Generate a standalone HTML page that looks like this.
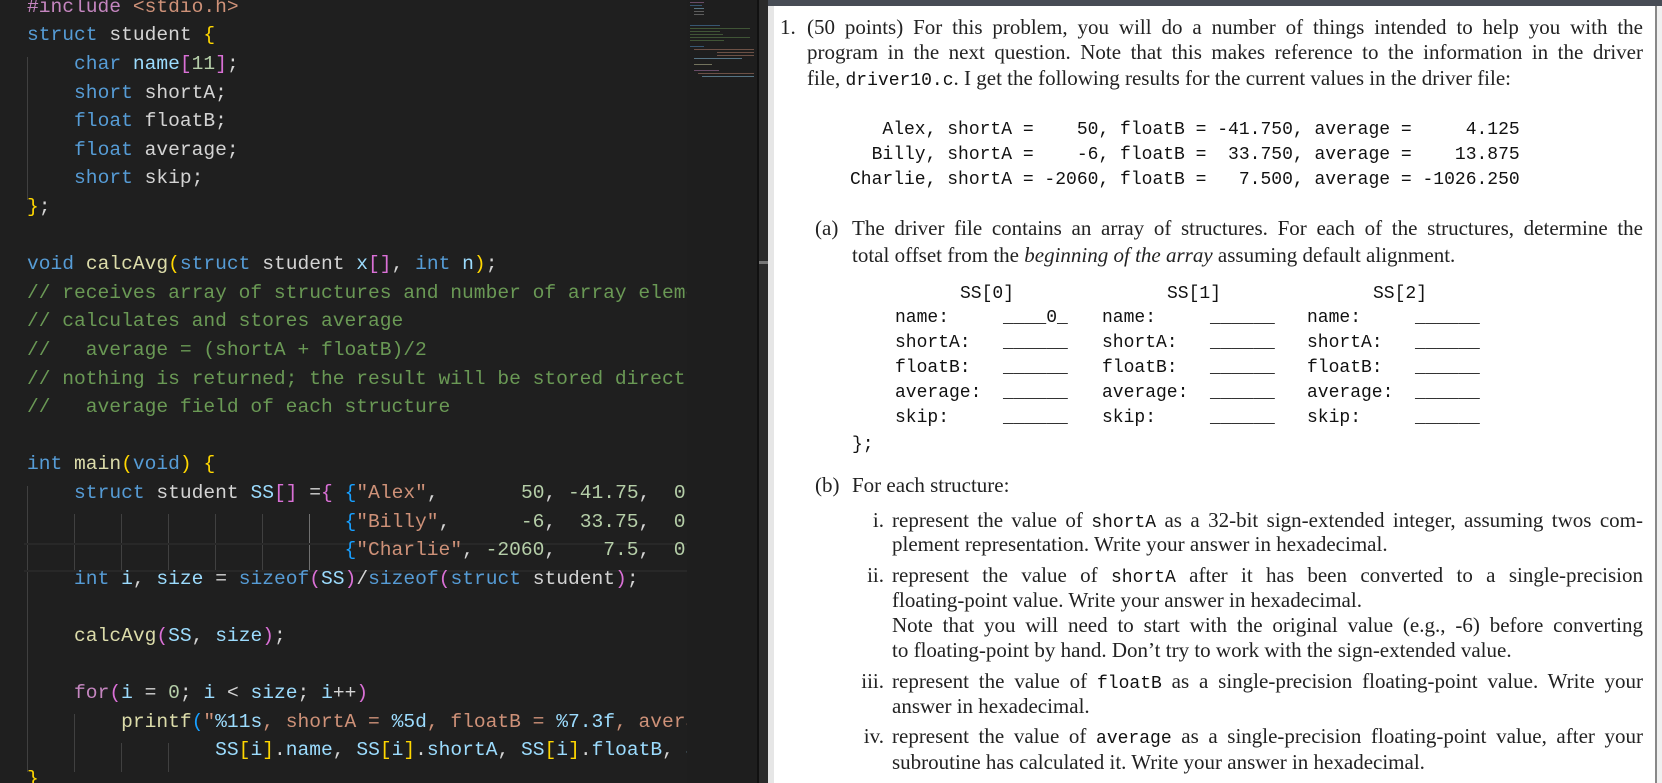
<!DOCTYPE html>
<html><head><meta charset="utf-8"><style>
*{margin:0;padding:0;box-sizing:border-box}
body{width:1662px;height:783px;overflow:hidden;background:#1f1f1f;position:relative;font-family:"Liberation Sans",sans-serif}
#ed{position:absolute;left:0;top:0;width:687px;height:783px;overflow:hidden;background:#1f1f1f}
.l{position:absolute;left:27px;height:28.6px;line-height:28.6px;font-family:"Liberation Mono",monospace;font-size:19.6px;white-space:pre;color:#d4d4d4}
.k{color:#569cd6}.v{color:#9cdcfe}.c{color:#6a9955}.s{color:#ce9178}.n{color:#b5cea8}.f{color:#dcdcaa}.p{color:#c586c0}.y{color:#ffd700}.m{color:#da70d6}.b{color:#179fff}
.g{position:absolute;width:1px;background:#404040}
#mm{position:absolute;left:687px;top:0;width:70px;height:783px;background:#1e1e1e}
.mb{position:absolute;height:1px;opacity:.45}
#doc{position:absolute;left:774px;top:0;width:881px;height:783px;background:#fff}
.d{position:absolute;font-family:"Liberation Serif",serif;font-size:21px;line-height:26px;color:#222;white-space:nowrap}
.j{text-align:justify;text-align-last:justify;white-space:normal;height:26px;overflow:visible}
.tt{font-family:"Liberation Mono",monospace;font-size:18px;color:#111}
.mo{position:absolute;font-family:"Liberation Mono",monospace;font-size:18px;line-height:25px;color:#111;white-space:pre}
</style></head><body>
<div id="ed">
<div class="g" style="left:27px;top:57px;height:143px"></div>
<div class="g" style="left:27px;top:486px;height:286px"></div>
<div class="g" style="left:74px;top:514px;height:58px"></div>
<div class="g" style="left:121px;top:514px;height:58px"></div>
<div class="g" style="left:168px;top:514px;height:58px"></div>
<div class="g" style="left:215px;top:514px;height:58px"></div>
<div class="g" style="left:262px;top:514px;height:58px"></div>
<div class="g" style="left:309px;top:514px;height:58px;background:#707070"></div>
<div class="g" style="left:74px;top:743px;height:29px"></div>
<div class="g" style="left:121px;top:743px;height:29px"></div>
<div class="g" style="left:168px;top:743px;height:29px"></div>
<div class="g" style="left:74px;top:714px;height:29px"></div>
<div style="position:absolute;left:24px;top:543px;width:663px;height:29px;border-top:2px solid #282828;border-bottom:2px solid #282828"></div>
<div class="l" style="top:-7.3px"><span class="p">#include</span> <span class="s">&lt;stdio.h&gt;</span></div>
<div class="l" style="top:21.3px"><span class="k">struct</span> student <span class="y">{</span></div>
<div class="l" style="top:49.9px">    <span class="k">char</span> <span class="v">name</span><span class="m">[</span><span class="n">11</span><span class="m">]</span>;</div>
<div class="l" style="top:78.5px">    <span class="k">short</span> shortA;</div>
<div class="l" style="top:107.1px">    <span class="k">float</span> floatB;</div>
<div class="l" style="top:135.7px">    <span class="k">float</span> average;</div>
<div class="l" style="top:164.3px">    <span class="k">short</span> skip;</div>
<div class="l" style="top:192.9px"><span class="y">}</span>;</div>
<div class="l" style="top:250.1px"><span class="k">void</span> <span class="f">calcAvg</span><span class="y">(</span><span class="k">struct</span> student <span class="v">x</span><span class="m">[]</span>, <span class="k">int</span> <span class="v">n</span><span class="y">)</span>;</div>
<div class="l c" style="top:278.7px">// receives array of structures and number of array elements</div>
<div class="l c" style="top:307.3px">// calculates and stores average</div>
<div class="l c" style="top:335.9px">//   average = (shortA + floatB)/2</div>
<div class="l c" style="top:364.5px">// nothing is returned; the result will be stored directly in the</div>
<div class="l c" style="top:393.1px">//   average field of each structure</div>
<div class="l" style="top:450.3px"><span class="k">int</span> <span class="f">main</span><span class="y">(</span><span class="k">void</span><span class="y">)</span> <span class="y">{</span></div>
<div class="l" style="top:478.9px">    <span class="k">struct</span> student <span class="v">SS</span><span class="m">[]</span> =<span class="m">{</span> <span class="b">{</span><span class="s">"Alex"</span>,       <span class="n">50</span>, <span class="n">-41.75</span>,  <span class="n">0</span>, <span class="n">0</span><span class="b">}</span>,</div>
<div class="l" style="top:507.5px">                           <span class="b">{</span><span class="s">"Billy"</span>,      <span class="n">-6</span>,  <span class="n">33.75</span>,  <span class="n">0</span>, <span class="n">0</span><span class="b">}</span>,</div>
<div class="l" style="top:536.1px">                           <span class="b">{</span><span class="s">"Charlie"</span>, <span class="n">-2060</span>,    <span class="n">7.5</span>,  <span class="n">0</span>, <span class="n">0</span><span class="b">}</span><span class="m">}</span>;</div>
<div class="l" style="top:564.7px">    <span class="k">int</span> <span class="v">i</span>, <span class="v">size</span> = <span class="k">sizeof</span><span class="m">(</span><span class="v">SS</span><span class="m">)</span>/<span class="k">sizeof</span><span class="m">(</span><span class="k">struct</span> student<span class="m">)</span>;</div>
<div class="l" style="top:621.9px">    <span class="f">calcAvg</span><span class="m">(</span><span class="v">SS</span>, <span class="v">size</span><span class="m">)</span>;</div>
<div class="l" style="top:679.1px">    <span class="p">for</span><span class="m">(</span><span class="v">i</span> = <span class="n">0</span>; <span class="v">i</span> &lt; <span class="v">size</span>; <span class="v">i</span>++<span class="m">)</span></div>
<div class="l" style="top:707.7px">        <span class="f">printf</span><span class="b">(</span><span class="s">"</span><span class="v">%11s</span><span class="s">, shortA = </span><span class="v">%5d</span><span class="s">, floatB = </span><span class="v">%7.3f</span><span class="s">, average = </span></div>
<div class="l" style="top:736.3px">                <span class="v">SS</span><span class="y">[</span><span class="v">i</span><span class="y">]</span>.<span class="v">name</span>, <span class="v">SS</span><span class="y">[</span><span class="v">i</span><span class="y">]</span>.<span class="v">shortA</span>, <span class="v">SS</span><span class="y">[</span><span class="v">i</span><span class="y">]</span>.<span class="v">floatB</span>, <span class="v">SS</span><span class="y">[</span><span class="v">i</span><span class="y">]</span>.<span class="v">average</span><span class="b">)</span>;</div>
<div class="l" style="top:764.9px"><span class="y">}</span></div>
</div>
<div id="mm">
<div class="mb" style="left:3px;top:2px;width:14px;background:#c586c0"></div>
<div class="mb" style="left:3px;top:5px;width:12px;background:#569cd6"></div>
<div class="mb" style="left:7px;top:8px;width:10px;background:#9cdcfe"></div>
<div class="mb" style="left:7px;top:11px;width:10px;background:#aaa"></div>
<div class="mb" style="left:7px;top:14px;width:10px;background:#aaa"></div>
<div class="mb" style="left:3px;top:25px;width:30px;background:#569cd6"></div>
<div class="mb" style="left:3px;top:28px;width:60px;background:#6a9955"></div>
<div class="mb" style="left:3px;top:31px;width:30px;background:#6a9955"></div>
<div class="mb" style="left:3px;top:34px;width:33px;background:#6a9955"></div>
<div class="mb" style="left:3px;top:37px;width:60px;background:#6a9955"></div>
<div class="mb" style="left:3px;top:40px;width:34px;background:#6a9955"></div>
<div class="mb" style="left:3px;top:46px;width:14px;background:#569cd6"></div>
<div class="mb" style="left:7px;top:49px;width:60px;background:#ce9178"></div>
<div class="mb" style="left:30px;top:52px;width:37px;background:#ce9178"></div>
<div class="mb" style="left:30px;top:55px;width:37px;background:#ce9178"></div>
<div class="mb" style="left:7px;top:58px;width:48px;background:#9cdcfe"></div>
<div class="mb" style="left:7px;top:64px;width:18px;background:#dcdcaa"></div>
<div class="mb" style="left:7px;top:70px;width:25px;background:#c586c0"></div>
<div class="mb" style="left:11px;top:73px;width:56px;background:#ce9178"></div>
<div class="mb" style="left:15px;top:76px;width:52px;background:#9cdcfe"></div>
</div>
<div style="position:absolute;left:757px;top:0;width:2px;height:783px;background:#111"></div>
<div style="position:absolute;left:759px;top:0;width:9px;height:783px;background:#2b2b2b"></div>
<div style="position:absolute;left:759px;top:261px;width:9px;height:3px;background:#777"></div>
<div style="position:absolute;left:768px;top:0;width:6px;height:783px;background:#e6e6e6"></div>
<div id="doc"></div>
<div style="position:absolute;left:768px;top:0;width:894px;height:6px;background:#474c55"></div>
<div style="position:absolute;left:1655px;top:6px;width:2px;height:777px;background:#888"></div>
<div style="position:absolute;left:1657px;top:6px;width:5px;height:777px;background:#f0f0f0"></div>

<div class="d" style="left:780px;top:14px">1.</div>
<div class="d j" style="left:807px;top:14px;width:836px">(50 points) For this problem, you will do a number of things intended to help you with the</div>
<div class="d j" style="left:807px;top:39px;width:836px">program in the next question. Note that this makes reference to the information in the driver</div>
<div class="d" style="left:807px;top:65px">file, <span class="tt">driver10.c</span>. I get the following results for the current values in the driver file:</div>
<div class="mo" style="left:850px;top:118px">   Alex, shortA =    50, floatB = -41.750, average =     4.125
  Billy, shortA =    -6, floatB =  33.750, average =    13.875
Charlie, shortA = -2060, floatB =   7.500, average = -1026.250</div>

<div class="d" style="left:815px;top:215px">(a)</div>
<div class="d j" style="left:852px;top:215px;width:791px">The driver file contains an array of structures. For each of the structures, determine the</div>
<div class="d" style="left:852px;top:242px">total offset from the <i>beginning of the array</i> assuming default alignment.</div>
<div class="mo" style="left:960px;top:282px">SS[0]</div>
<div class="mo" style="left:1167px;top:282px">SS[1]</div>
<div class="mo" style="left:1373px;top:282px">SS[2]</div>
<div class="mo" style="left:895px;top:306px">name:     ____0_
shortA:   ______
floatB:   ______
average:  ______
skip:     ______</div>
<div class="mo" style="left:1102px;top:306px">name:     ______
shortA:   ______
floatB:   ______
average:  ______
skip:     ______</div>
<div class="mo" style="left:1307px;top:306px">name:     ______
shortA:   ______
floatB:   ______
average:  ______
skip:     ______</div>
<div class="mo" style="left:852px;top:433px">};</div>

<div class="d" style="left:815px;top:472px">(b)</div>
<div class="d" style="left:852px;top:472px">For each structure:</div>
<div class="d" style="left:862px;top:507px;width:22px;text-align:right">i.</div>
<div class="d j" style="left:892px;top:507px;width:751px">represent the value of <span class="tt">shortA</span> as a 32-bit sign-extended integer, assuming twos com-</div>
<div class="d" style="left:892px;top:531px">plement representation. Write your answer in hexadecimal.</div>
<div class="d" style="left:846px;top:562px;width:38px;text-align:right">ii.</div>
<div class="d j" style="left:892px;top:562px;width:751px">represent the value of <span class="tt">shortA</span> after it has been converted to a single-precision</div>
<div class="d" style="left:892px;top:587px">floating-point value. Write your answer in hexadecimal.</div>
<div class="d j" style="left:892px;top:612px;width:751px">Note that you will need to start with the original value (e.g., -6) before converting</div>
<div class="d" style="left:892px;top:637px">to floating-point by hand. Don’t try to work with the sign-extended value.</div>
<div class="d" style="left:846px;top:668px;width:38px;text-align:right">iii.</div>
<div class="d j" style="left:892px;top:668px;width:751px">represent the value of <span class="tt">floatB</span> as a single-precision floating-point value. Write your</div>
<div class="d" style="left:892px;top:693px">answer in hexadecimal.</div>
<div class="d" style="left:846px;top:723px;width:38px;text-align:right">iv.</div>
<div class="d j" style="left:892px;top:723px;width:751px">represent the value of <span class="tt">average</span> as a single-precision floating-point value, after your</div>
<div class="d" style="left:892px;top:749px">subroutine has calculated it. Write your answer in hexadecimal.</div>
</body></html>
